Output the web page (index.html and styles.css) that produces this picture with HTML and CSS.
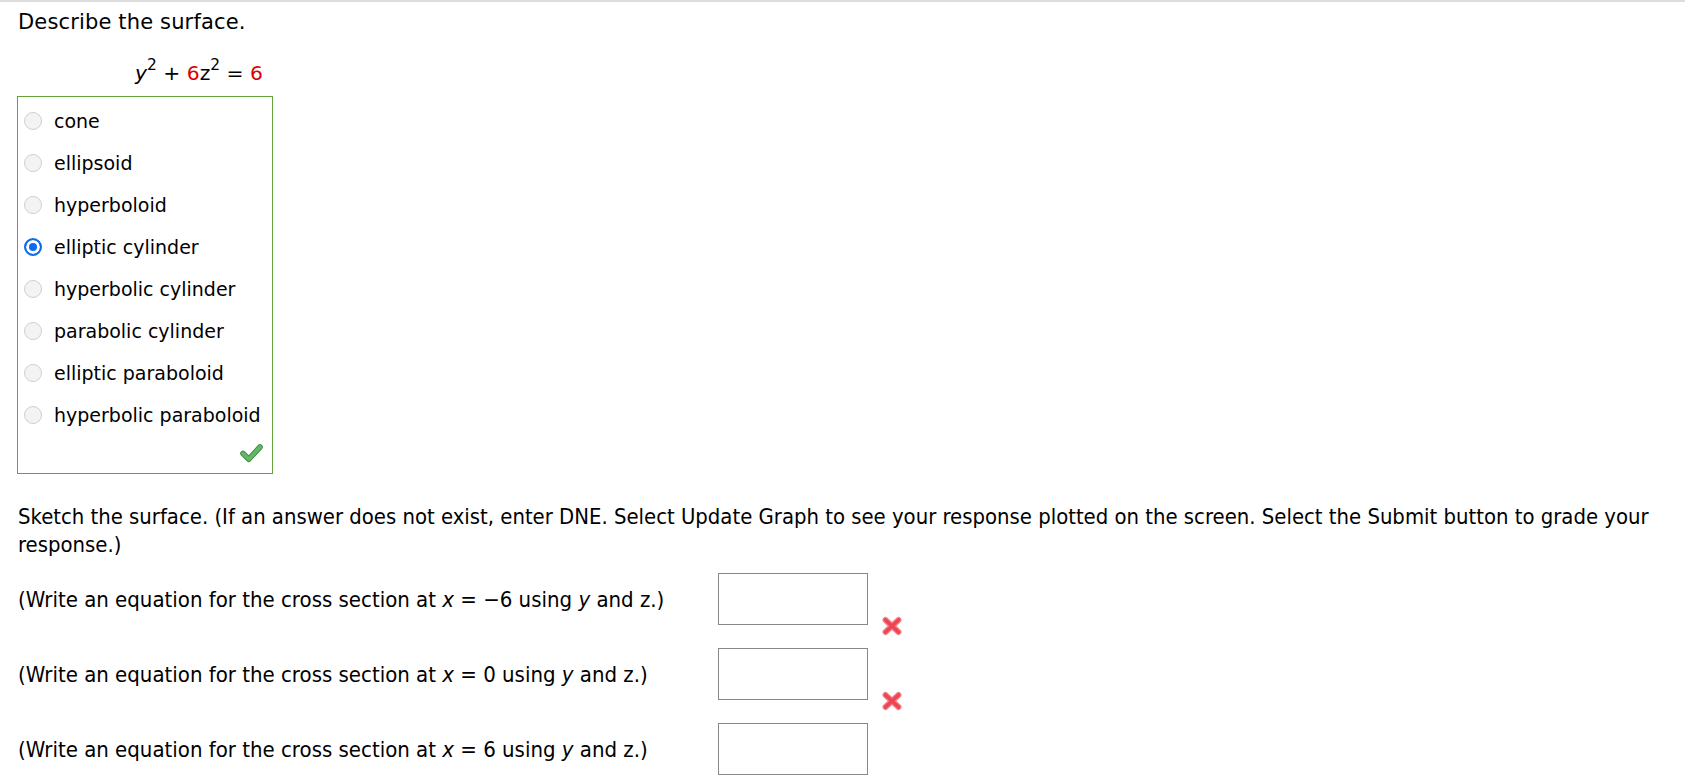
FILE: index.html
```html
<!DOCTYPE html>
<html>
<head>
<meta charset="utf-8">
<title>Describe the surface</title>
<link rel="stylesheet" href="styles.css">
</head>
<body>
<div class="topline"></div>
<div class="page">
  <p class="question">Describe the surface.</p>
  <div class="equation"><i>y</i><sup>2</sup> + <span class="red">6</span>z<sup>2</sup> = <span class="red">6</span></div>
  <div class="choices">
    <label class="opt"><span class="radio"></span>cone</label>
    <label class="opt"><span class="radio"></span>ellipsoid</label>
    <label class="opt"><span class="radio"></span>hyperboloid</label>
    <label class="opt"><span class="radio checked"></span>elliptic cylinder</label>
    <label class="opt"><span class="radio"></span>hyperbolic cylinder</label>
    <label class="opt"><span class="radio"></span>parabolic cylinder</label>
    <label class="opt"><span class="radio"></span>elliptic paraboloid</label>
    <label class="opt"><span class="radio"></span>hyperbolic paraboloid</label>
    <div class="checkrow">
      <svg class="check" width="23" height="20" viewBox="0 0 23 20">
        <path d="M3 10.5 L8.8 16.2 L20 4" fill="none" stroke="#3f8f42" stroke-width="5.6" stroke-linecap="round" stroke-linejoin="round"/>
        <path d="M3 10.5 L8.8 16.2 L20 4" fill="none" stroke="#62b866" stroke-width="3.6" stroke-linecap="round" stroke-linejoin="round"/>
      </svg>
    </div>
  </div>
  <p class="sketch">Sketch the surface. (If an answer does not exist, enter DNE. Select Update Graph to see your response plotted on the screen. Select the Submit button to grade your response.)</p>
  <div class="rows">
    <div class="row">
      <span class="rtext">(Write an equation for the cross section at <i>x</i> = −6 using <i>y</i> and z.)</span>
      <span class="inp"></span>
      <svg class="xmark" width="22" height="20" viewBox="0 0 22 20">
        <path d="M4.5 4 L17.5 16 M17.5 4 L4.5 16" fill="none" stroke="#f48088" stroke-width="6" stroke-linecap="round"/>
        <path d="M4.5 4 L17.5 16 M17.5 4 L4.5 16" fill="none" stroke="#ee4552" stroke-width="3.6" stroke-linecap="round"/>
      </svg>
    </div>
    <div class="row">
      <span class="rtext">(Write an equation for the cross section at <i>x</i> = 0 using <i>y</i> and z.)</span>
      <span class="inp"></span>
      <svg class="xmark" width="22" height="20" viewBox="0 0 22 20">
        <path d="M4.5 4 L17.5 16 M17.5 4 L4.5 16" fill="none" stroke="#f48088" stroke-width="6" stroke-linecap="round"/>
        <path d="M4.5 4 L17.5 16 M17.5 4 L4.5 16" fill="none" stroke="#ee4552" stroke-width="3.6" stroke-linecap="round"/>
      </svg>
    </div>
    <div class="row">
      <span class="rtext">(Write an equation for the cross section at <i>x</i> = 6 using <i>y</i> and z.)</span>
      <span class="inp"></span>
    </div>
  </div>
</div>
</body>
</html>
```
FILE: styles.css
```css
html, body {
  margin: 0;
  padding: 0;
  background: #fff;
}
body {
  font-family: "DejaVu Sans", Verdana, sans-serif;
  font-size: 19px;
  color: #000;
}
.topline {
  height: 2px;
  background: #dddddd;
}
.page {
  padding: 0 17px;
}
.question {
  margin: 8px 0 0 1px;
  line-height: 24px;
  font-size: 21px;
  letter-spacing: 0.15px;
}
.equation {
  margin: 25px 0 0 118px;
  line-height: 28px;
  font-size: 20.3px;
}
.equation sup {
  font-size: 0.76em;
  line-height: 0;
  vertical-align: 0.62em;
}
.red {
  color: #dd0000;
}
.choices {
  margin-top: 9px;
  width: 254px;
  border: 1px solid #63a33a;
  padding-top: 3px;
}
.opt {
  display: flex;
  align-items: center;
  height: 42px;
  padding-left: 6px;
}
.radio {
  box-sizing: border-box;
  width: 18px;
  height: 18px;
  border-radius: 50%;
  border: 1px solid #d0d0d0;
  background: #f3f3f3;
  margin-right: 12px;
  flex: none;
}
.radio.checked {
  border: 2px solid #0b6cf0;
  background: #0b6cf0;
  box-shadow: inset 0 0 0 3px #fff;
}
.checkrow {
  height: 37px;
  display: flex;
  justify-content: flex-end;
  align-items: flex-start;
  padding-right: 9px;
}
.check {
  margin-top: 7px;
}
.sketch {
  margin: 29px 0 0 1px;
  line-height: 28px;
  font-family: "DejaVu Sans Condensed", "DejaVu Sans", sans-serif;
  font-size: 21.9px;
}
.rows {
  margin-top: 14px;
  display: flex;
  flex-direction: column;
  gap: 23px;
}
.row {
  display: grid;
  grid-template-columns: 701px 150px auto;
  align-items: center;
  height: 52px;
  font-family: "DejaVu Sans Condensed", "DejaVu Sans", sans-serif;
  font-size: 22px;
}
.rtext {
  padding-left: 1px;
}
.inp {
  box-sizing: border-box;
  height: 52px;
  border: 1px solid #888;
  background: #fff;
}
.xmark {
  align-self: end;
  margin: 0 0 -11px 13px;
}
```
